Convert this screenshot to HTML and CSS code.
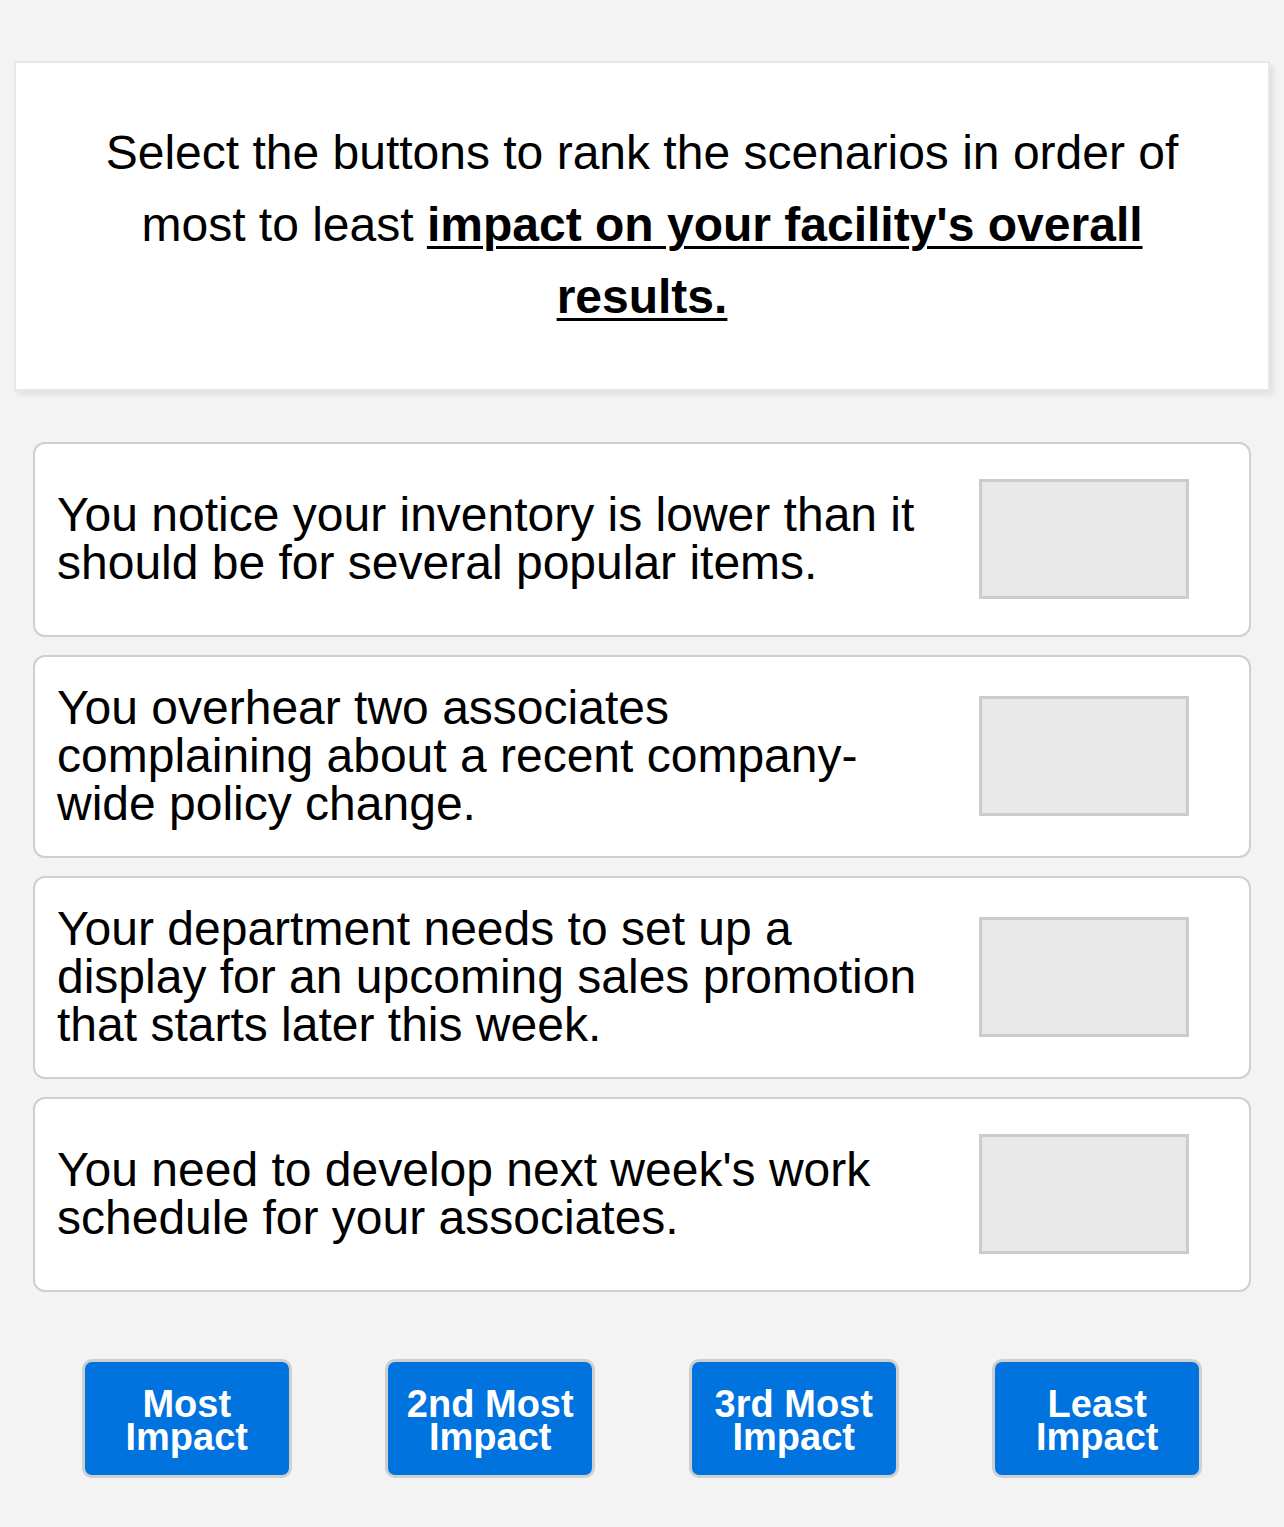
FILE: index.html
```html
<!DOCTYPE html>
<html lang="en">
<head>
<meta charset="utf-8">
<title>Rank scenarios</title>
<link rel="stylesheet" href="styles.css">
</head>
<body>
<div class="page">
  <div class="prompt">
    <p>Select the buttons to rank the scenarios in order of most to least <strong>impact on your facility's overall results.</strong></p>
  </div>
  <div class="list">
    <div class="item">
      <div class="item-text">You notice your inventory is lower than it should be for several popular items.</div>
      <div class="slot"></div>
    </div>
    <div class="item">
      <div class="item-text">You overhear two associates complaining about a recent company-wide policy change.</div>
      <div class="slot"></div>
    </div>
    <div class="item">
      <div class="item-text">Your department needs to set up a display for an upcoming sales promotion that starts later this week.</div>
      <div class="slot"></div>
    </div>
    <div class="item">
      <div class="item-text">You need to develop next week's work schedule for your associates.</div>
      <div class="slot"></div>
    </div>
  </div>
  <div class="buttons">
    <div class="cell"><button class="rank">Most<br>Impact</button></div>
    <div class="cell"><button class="rank">2nd Most<br>Impact</button></div>
    <div class="cell"><button class="rank">3rd Most<br>Impact</button></div>
    <div class="cell"><button class="rank">Least<br>Impact</button></div>
  </div>
</div>
</body>
</html>
```

FILE: styles.css
```css
html, body {
  margin: 0;
  padding: 0;
  background: #f3f3f3;
}
body {
  font-family: "Liberation Sans", Arial, sans-serif;
  color: #000;
}
.page {
  padding: 61px 14px 49px 14px;
}
.prompt {
  background: #fff;
  border: 2px solid #e7e7e7;
  box-shadow: 4px 4px 5px rgba(0, 0, 0, 0.07);
  padding: 54px 60px 56px;
  text-align: center;
}
.prompt p {
  margin: 0;
  font-size: 48px;
  line-height: 72px;
}
.prompt strong {
  font-weight: bold;
  text-decoration: underline;
  text-decoration-thickness: 3px;
  text-underline-offset: 5px;
}
.list {
  margin: 51px 19px 0;
  display: flex;
  flex-direction: column;
  gap: 18px;
}
.item {
  background: #fff;
  border: 2px solid #cfcfcf;
  border-radius: 12px;
  display: flex;
  align-items: center;
  padding: 27px 60px 28px 22px;
}
.item-text {
  flex: 1;
  font-size: 48px;
  line-height: 48px;
  margin-right: 58px;
}
.slot {
  width: 204px;
  height: 114px;
  background: #e8e8e8;
  border: 3px solid #cccccc;
  margin: 8px 0;
  flex-shrink: 0;
}
.buttons {
  margin: 67px 21px 0;
  display: grid;
  grid-template-columns: repeat(4, 1fr);
}
.cell {
  display: flex;
  justify-content: center;
}
.rank {
  width: 210px;
  height: 119px;
  background: #0073de;
  border: 3px solid #cfcfcf;
  border-radius: 10px;
  color: #fff;
  font-family: "Liberation Sans", Arial, sans-serif;
  font-weight: bold;
  font-size: 38px;
  line-height: 33px;
  padding: 4px 0 0;
  text-align: center;
}
```
